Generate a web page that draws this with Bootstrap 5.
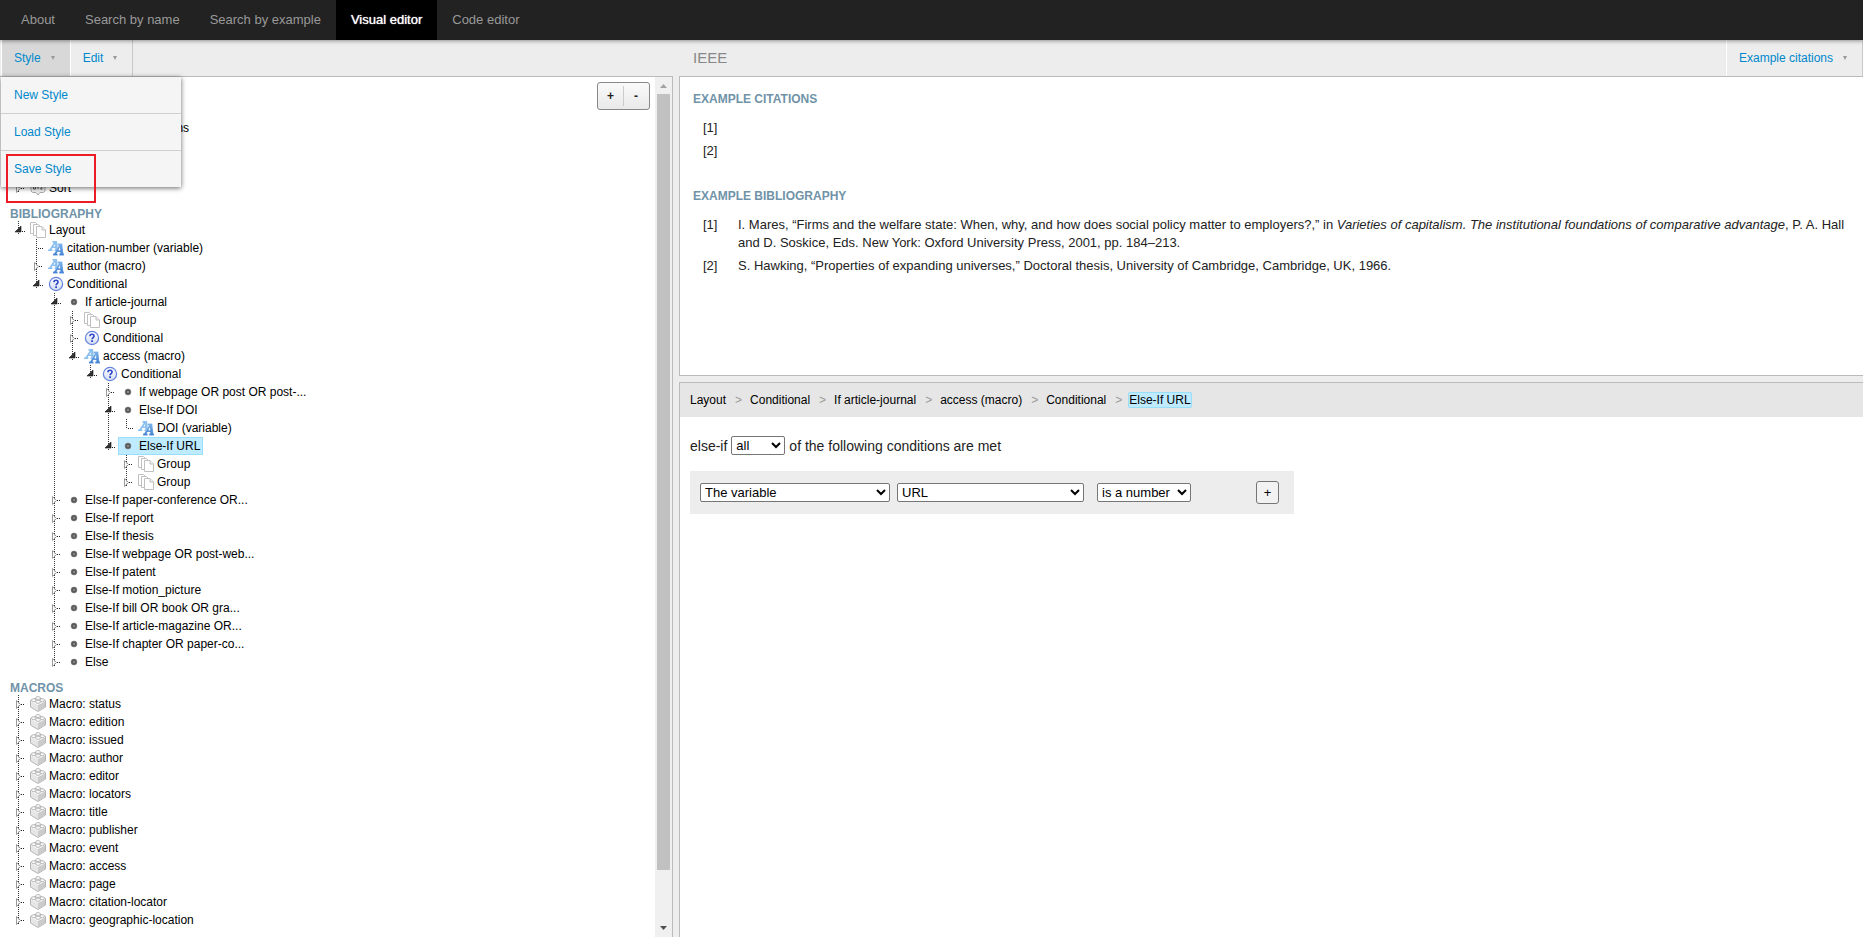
<!DOCTYPE html>
<html lang="en">
<head>
<meta charset="utf-8">
<meta name="viewport" content="width=device-width, initial-scale=1">
<title>Visual editor</title>
<link href="https://cdn.jsdelivr.net/npm/bootstrap@5.3.0/dist/css/bootstrap.min.css" rel="stylesheet">
<script src="https://cdn.jsdelivr.net/npm/bootstrap@5.3.0/dist/js/bootstrap.bundle.min.js"></script>
<style>
  body { font: 13px/18px "Liberation Sans", Arial, sans-serif; color: #222; background: #ededed; }
  a { text-decoration: none; }
  ul { list-style: none; margin: 0; padding: 0; }
  .site-bar { background: #222; height: 40px; padding: 0 6px; box-shadow: 0 1px 4px rgba(0,0,0,.4); z-index: 2; flex: none; }
  .site-bar .nav-link { color: #999; padding: 11px 15px; line-height: 18px; }
  .site-bar .nav-link.active { color: #fff; background: #000; text-shadow: 0 0 1px #fff; }
  .tool-bar { height: 36px; flex: none; z-index: 1; font-size: 12px; }
  .tool-btn { border: 0; height: 36px; color: #08c; background: transparent; padding: 0 15px 0 12px; display: flex; align-items: center; gap: 10px; }
  .tool-btn::after { content: ""; border: 2px solid transparent; border-top: 4px solid #999; border-bottom: 0; }
  .tool-slot { border-left: 1px solid #fff; border-right: 1px solid #c8c8c8; }
  .tool-slot.opened { border-right: 0; margin-left: 1px; }
  .opened > .tool-btn { background: #d8d8d8; }
  .opened .dropdown-menu { top: 37px; left: -1px; width: 180px; padding: 0; margin: 0; border: 0; border-radius: 0; background: #f5f5f5; font-size: 12px; box-shadow: 0 1px 5px rgba(0,0,0,.6); }
  .opened .dropdown-item { color: #08c; padding: 9px 13px; line-height: 18px; }
  .opened li + li { border-top: 1px solid #d0d0d0; }
  .style-name { font-size: 15px; color: #888; margin: 0; line-height: 36px; }
  .col-tree { width: 36.125%; flex: none; }
  .col-right { min-width: 0; margin-left: 6px; }
  .pane { background: #fff; border: 1px solid #bbb; border-right: 0; }
  .tree-pane { border: 1px solid #bbb; border-left: 0; border-bottom: 0; }
  .tree-body { padding: 0 10px 8px; }
  .sect { font-size: 12px; font-weight: 700; color: #7093a8; text-transform: uppercase; margin: 0; }
  .tree-body .sect { line-height: 14px; margin-top: 10px; }
  .tree { font-size: 12px; }
  .tree ul { padding-left: 18px; }
  .tree li { background: repeating-linear-gradient(#333 0 1px, transparent 1px 2px) 8px 0 / 1px 100% no-repeat; }
  .tree li:last-child { background-size: 1px 14px; }
  .tree li.leaf:last-child { background-size: 1px 9px; }
  .node { display: flex; height: 18px; }
  .twist { border: 0; padding: 0; width: 18px; height: 18px; background: none; display: block; flex: none; }
  .twist svg, .node a svg, .arrow { display: block; }
  .node a { color: #000; display: flex; align-items: center; gap: 3px; border: 1px solid transparent; padding: 0 2px 0 1px; line-height: 16px; white-space: nowrap; }
  .node a.picked { background: #beebff; border-color: #99defd; }
  .pm { top: 5px; right: 5px; width: 53px; height: 28px; border: 1px solid #888; border-radius: 3px; background: linear-gradient(#fafafa, #e9e9e9); padding: 3px 1px 3px 0; }
  .pm button { border: 0; background: none; padding: 0; font-size: 12px; font-weight: 700; line-height: 18px; color: #222; }
  .pm button + button { border-left: 1px solid #ccc; }
  .sbar { width: 17px; flex: none; background: #f0f0f0; }
  .sbar-run { height: 94%; width: 13px; background: #c1c1c1; }
  .cites { padding: 13px 14px 0 13px; height: 300px; flex: none; }
  .cites .sect { line-height: 18px; }
  .entries { padding-top: 11px; margin-bottom: 27px; }
  .entry { display: flex; margin-bottom: 5px; padding-left: 10px; }
  .entry b { font-weight: 400; width: 35px; flex: none; }
  .editor { margin-top: 6px; }
  .crumbs { background: #e6e6e6; font-size: 12px; height: 34px; padding: 0 10px; }
  .crumbs a { color: #000; border: 1px solid transparent; padding: 0 1px; line-height: 14px; }
  .crumbs a.picked { background: #beebff; border-color: #99defd; border-radius: 2px; padding: 0; }
  .crumbs li + li::before { content: ">"; color: #999; padding: 0 6px 0 7px; }
  .crumbs ol { list-style: none; padding: 0; margin: 0 0 0 -2px; }
  .form-area { padding: 19px 10px; }
  .form-area select { font-size: 13px; line-height: 15px; height: 19px; padding: 0; border: 1px solid #767676; border-radius: 2px; background-color: #fff; color: #000; }
  .match-line { font-size: 14px; line-height: 18px; }
  .cond { background: #ededed; width: 604px; max-width: 100%; height: 43px; padding: 0 15px 0 10px; margin-top: 16px; }
  .w-all { width: 54px; }
  .w-kind { width: 190px; }
  .w-var { width: 187px; margin-left: 7px; }
  .w-test { width: 94px; margin-left: 13px; }
  .plus { width: 23px; height: 23px; padding: 0; border: 1px solid #767676; border-radius: 3px; background: #f2f2f2; color: #000; line-height: 18px; }
  .callout { left: 6px; top: 154px; width: 90px; height: 49px; border: 2px solid #ed1c24; z-index: 1100; pointer-events: none; }
</style>
</head>
<body class="d-flex flex-column vh-100 overflow-hidden">
<svg width="0" height="0" class="position-absolute" aria-hidden="true">
  <defs>
    <linearGradient id="gBlue" x1="0" y1="0" x2="0" y2="1"><stop offset="0" stop-color="#7db4ec"/><stop offset="1" stop-color="#3f7fd2"/></linearGradient>
    <linearGradient id="gHelp" x1="0" y1="0" x2="0" y2="1"><stop offset="0" stop-color="#fff"/><stop offset="1" stop-color="#d3dcf2"/></linearGradient>
    <symbol id="shut" viewBox="0 0 18 18"><path d="M11 9.500h1M13 9.500h1" stroke="#222"/><path d="M6.500 5.500v8l4-4z" fill="#fff" fill-opacity=".75" stroke="#999"/></symbol>
    <symbol id="open" viewBox="0 0 18 18"><path d="M12 10.500h1M14 10.500h1" stroke="#222"/><path d="M11 5v6H5z" fill="#333" stroke="#111" stroke-width=".6"/></symbol>
    <symbol id="stem" viewBox="0 0 18 18"><path d="M10 9.500h1M12 9.500h1M14 9.500h1" stroke="#222"/></symbol>
    <symbol id="pages" viewBox="0 0 16 16"><g fill="#fff" stroke="#c0c0c0"><path d="M.5.5h5l2 2v9h-7z"/><path d="M3.500 2.500h5l2 2v9h-7z"/><path d="M6.500 4.500h5.500l3.500 3.500v7.500h-9z"/><path d="M12 4.500v3.500h3.500" fill="#eee"/></g></symbol>
    <symbol id="letters" viewBox="0 0 16 16">
      <path d="M4.500 1H9l1 8.500h1V11H6.500V9.500h.8L7.200 8H4.400l-.9 1.500h.9V11H0V9.500h1.300L5.800 2.700H4.500zM7 4.200L5.300 6.600h1.800z" fill="#8cc0ef" fill-rule="evenodd"/>
      <path d="M9.500 3.500h4.800l1 10h.7v2h-4.800v-2h1.100l-.1-1.500H9.400L8.600 13.500h1v2H5v-2h1.200L11 5.500H9.500zM12 7.400l-1.700 2.900h1.800z" fill="url(#gBlue)" fill-rule="evenodd" stroke="#fff" stroke-width=".2"/>
    </symbol>
    <symbol id="help" viewBox="0 0 16 16"><circle cx="8" cy="8" r="6.600" fill="url(#gHelp)" stroke="#6482dc" stroke-width="1.200"/><path d="M5.900 6.300c0-2.700 4.300-2.600 4.200-.2 0 1.400-2 1.500-2 3.100" fill="none" stroke="#2c46c8" stroke-width="1.600"/><path d="M7.200 10.300h1.800v1.700H7.200z" fill="#2c46c8"/></symbol>
    <symbol id="dot" viewBox="0 0 16 16"><circle cx="8" cy="8" r="2.900" fill="#555" stroke="#777" stroke-width=".8"/><circle cx="8" cy="8" r="1.200" fill="#888"/></symbol>
    <symbol id="brick" viewBox="0 0 16 16"><path d="M.5 4.500L8 1.500l7.500 3v6.500L8 15.500.5 11z" fill="#e6e6e6" stroke="#b4b4b4"/><path d="M8 8.500L15 5v5.800L8 15z" fill="#cbcbcb"/><path d="M1 5l7 3.500L15 5" fill="none" stroke="#fafafa"/><g fill="#f8f8f8" stroke="#b0b0b0" stroke-width=".8"><ellipse cx="8" cy="2" rx="2.400" ry="1.500"/><ellipse cx="3.600" cy="4.200" rx="2.200" ry="1.500"/><ellipse cx="12.400" cy="4.200" rx="2.200" ry="1.500"/><ellipse cx="8" cy="5.800" rx="2.400" ry="1.600"/></g></symbol>
    <symbol id="sort" viewBox="0 0 16 16"><path d="M2.500 1.500h11L15 3v8l-1.500 1.500H10L8 15l-2-2.500H2.500L1 11V3z" fill="#eee" stroke="#aaa"/><path d="M3.500 9V6.500h2V9zM7 8h2M10.500 6.500h2l-2 2.500h2" fill="none" stroke="#555"/></symbol>
  </defs>
</svg>

<nav class="site-bar d-flex position-relative" aria-label="Site">
  <a class="nav-link" href="#">About</a>
  <a class="nav-link" href="#">Search by name</a>
  <a class="nav-link" href="#">Search by example</a>
  <a class="nav-link active" href="#" aria-current="page">Visual editor</a>
  <a class="nav-link" href="#">Code editor</a>
</nav>

<div class="tool-bar d-flex position-relative">
  <div class="col-tree d-flex">
    <div class="tool-slot opened position-relative">
      <button class="tool-btn" type="button" aria-expanded="true">Style</button>
      <ul class="dropdown-menu show">
        <li><a class="dropdown-item" href="#">New Style</a></li>
        <li><a class="dropdown-item" href="#">Load Style</a></li>
        <li><a class="dropdown-item" href="#">Save Style</a></li>
      </ul>
    </div>
    <div class="tool-slot"><button class="tool-btn" type="button">Edit</button></div>
  </div>
  <div class="d-flex flex-grow-1 justify-content-between ps-3">
    <h1 class="style-name ps-1">IEEE</h1>
    <div class="d-flex border-start border-secondary-subtle"><div class="tool-slot"><button class="tool-btn" type="button">Example citations</button></div></div>
  </div>
</div>

<main class="d-flex flex-grow-1 overflow-hidden">
  <section class="col-tree tree-pane bg-white d-flex position-relative overflow-hidden">
    <div class="tree-body flex-grow-1 position-relative">
      <div class="pm position-absolute d-flex">
        <button class="w-50" type="button" aria-label="Add node">+</button>
        <button class="w-50" type="button" aria-label="Delete node">-</button>
      </div>
      <h2 class="sect">Style</h2>
      <ul class="tree" id="style"></ul>
      <h2 class="sect">Citations</h2>
      <ul class="tree" id="citations"></ul>
      <h2 class="sect">Bibliography</h2>
      <ul class="tree" id="bibliography"></ul>
      <h2 class="sect">Macros</h2>
      <ul class="tree" id="macros"></ul>
    </div>
    <div class="sbar d-flex flex-column align-items-center" aria-hidden="true">
      <svg class="arrow flex-shrink-0" width="17" height="17"><path d="M5 11h7L8.500 7z" fill="#a3a3a3"/></svg>
      <div class="flex-grow-1 d-flex"><div class="sbar-run"></div></div>
      <svg class="arrow flex-shrink-0" width="17" height="17"><path d="M5 6h7l-3.500 4z" fill="#505050"/></svg>
    </div>
  </section>

  <div class="col-right d-flex flex-column flex-grow-1">
    <section class="pane cites">
      <h2 class="sect">Example citations</h2>
      <div class="entries">
        <div class="entry"><b>[1]</b></div>
        <div class="entry"><b>[2]</b></div>
      </div>
      <h2 class="sect">Example bibliography</h2>
      <div class="entries">
        <div class="entry"><b>[1]</b><span>I. Mares, “Firms and the welfare state: When, why, and how does social policy matter to employers?,” in <i>Varieties of capitalism. The institutional foundations of comparative advantage</i>, P. A. Hall and D. Soskice, Eds. New York: Oxford University Press, 2001, pp. 184–213.</span></div>
        <div class="entry"><b>[2]</b><span>S. Hawking, “Properties of expanding universes,” Doctoral thesis, University of Cambridge, Cambridge, UK, 1966.</span></div>
      </div>
    </section>
    <section class="pane editor flex-grow-1 border-bottom-0">
      <nav class="crumbs d-flex align-items-center" aria-label="Node path">
        <ol class="d-flex">
          <li><a href="#">Layout</a></li><li><a href="#">Conditional</a></li><li><a href="#">If article-journal</a></li><li><a href="#">access (macro)</a></li><li><a href="#">Conditional</a></li><li><a href="#" class="picked" aria-current="true">Else-If URL</a></li>
        </ol>
      </nav>
      <form class="form-area">
        <div class="match-line d-flex align-items-center gap-1">
          <label for="match">else-if</label>
          <select id="match" class="w-all"><option>all</option><option>any</option><option>none</option></select>
          <span>of the following conditions are met</span>
        </div>
        <div class="cond d-flex align-items-center">
          <select class="w-kind" aria-label="Kind"><option>The variable</option></select>
          <select class="w-var" aria-label="Variable"><option>URL</option></select>
          <select class="w-test" aria-label="Test"><option>is a number</option></select>
          <button class="plus ms-auto" type="button" aria-label="Add condition">+</button>
        </div>
      </form>
    </section>
  </div>
</main>
<div class="callout position-absolute"></div>

<script>
  // A node is [icon, label, children]; children is an array when expanded,
  // null for a leaf, and left out when the node is collapsed.
  const picked = "Else-If URL";
  const glyph = (id, size) => `<svg width="${size}" height="${size}" aria-hidden="true"><use href="#${id}"/></svg>`;
  const render = nodes => nodes.map(([icon, label, kids]) => {
    const twist = kids === null ? `<span class="twist">${glyph("stem", 18)}</span>`
      : `<button class="twist" type="button" aria-label="${kids ? "Collapse" : "Expand"}">${glyph(kids ? "open" : "shut", 18)}</button>`;
    return `<li class="${kids === null ? "leaf" : "branch"}"><div class="node">${twist}<a href="#" class="${label === picked ? "picked" : ""}">${glyph(icon, 16)}${label}</a></div>${kids ? `<ul>${render(kids)}</ul>` : ""}</li>`;
  }).join("");
  const trees = {
    style: [["dot", "Info", null], ["dot", "Global Formatting Options", null]],
    citations: [["pages", "Layout"], ["sort", "Sort"]],
    bibliography: [["pages", "Layout", [
      ["letters", "citation-number (variable)", null],
      ["letters", "author (macro)"],
      ["help", "Conditional", [
        ["dot", "If article-journal", [
          ["pages", "Group"],
          ["help", "Conditional"],
          ["letters", "access (macro)", [
            ["help", "Conditional", [
              ["dot", "If webpage OR post OR post-..."],
              ["dot", "Else-If DOI", [["letters", "DOI (variable)", null]]],
              ["dot", "Else-If URL", [["pages", "Group"], ["pages", "Group"]]]
            ]]
          ]]
        ]],
        ["dot", "Else-If paper-conference OR..."],
        ["dot", "Else-If report"],
        ["dot", "Else-If thesis"],
        ["dot", "Else-If webpage OR post-web..."],
        ["dot", "Else-If patent"],
        ["dot", "Else-If motion_picture"],
        ["dot", "Else-If bill OR book OR gra..."],
        ["dot", "Else-If article-magazine OR..."],
        ["dot", "Else-If chapter OR paper-co..."],
        ["dot", "Else"]
      ]]
    ]]],
    macros: ["status", "edition", "issued", "author", "editor", "locators", "title", "publisher", "event", "access", "page", "citation-locator", "geographic-location"].map(n => ["brick", "Macro: " + n])
  };
  for (const id in trees) document.getElementById(id).innerHTML = render(trees[id]);
</script>
</body>
</html>
